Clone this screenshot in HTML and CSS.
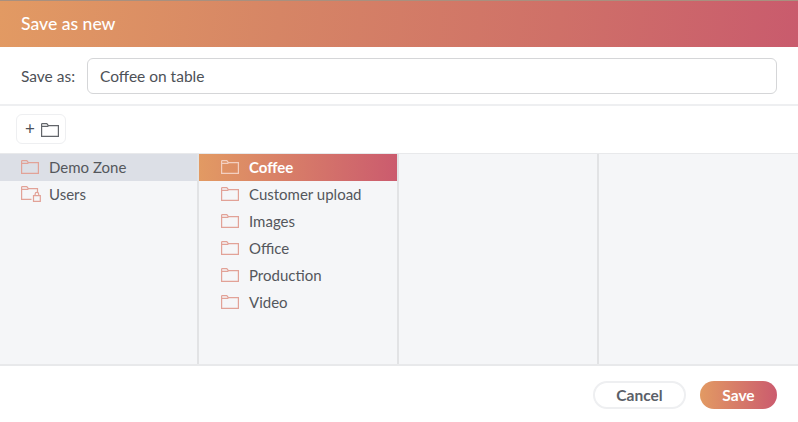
FILE: index.html
```html
<!DOCTYPE html>
<html lang="en">
<head>
<meta charset="utf-8">
<title>Save as new</title>
<link rel="stylesheet" href="styles.css">
</head>
<body>
<svg class="defs" width="0" height="0" aria-hidden="true">
  <symbol id="folder" viewBox="0 0 18 14">
    <path d="M.6 13.400V1.200C.6.800.9.600 1.300.600h4.500l1.600 2h10v10.800z M.6 3.300h6.800" fill="none" stroke="currentColor" stroke-width="1.200"/>
  </symbol>
  <symbol id="folder-lock" viewBox="0 0 20 16">
    <path d="M10.500 13.400H.6V1.200C.6.800.9.600 1.300.600h4.500l1.600 2h9.100v4 M.6 3.300h6.800" fill="none" stroke="currentColor" stroke-width="1.200"/>
    <path d="M12.500 9.600h6.800v5.700h-6.800z M14.100 9.600V8.200a1.800 1.800 0 0 1 3.600 0v1.400" fill="none" stroke="currentColor" stroke-width="1.200"/>
  </symbol>
</svg>
<main class="dialog">
  <header class="title-bar"><h1>Save as new</h1></header>
  <section class="name-row">
    <label class="name-label" for="name">Save as:</label>
    <input class="name-input" id="name" type="text" value="Coffee on table">
  </section>
  <section class="toolbar">
    <button class="new-folder" type="button"><span class="plus">+</span><svg class="toolbar-icon"><use href="#folder"/></svg></button>
  </section>
  <section class="columns">
    <ul class="column">
      <li class="item hover"><svg class="icon"><use href="#folder"/></svg>Demo Zone</li>
      <li class="item"><svg class="icon lock"><use href="#folder-lock"/></svg>Users</li>
    </ul>
    <ul class="column">
      <li class="item selected"><svg class="icon"><use href="#folder"/></svg>Coffee</li>
      <li class="item"><svg class="icon"><use href="#folder"/></svg>Customer upload</li>
      <li class="item"><svg class="icon"><use href="#folder"/></svg>Images</li>
      <li class="item"><svg class="icon"><use href="#folder"/></svg>Office</li>
      <li class="item"><svg class="icon"><use href="#folder"/></svg>Production</li>
      <li class="item"><svg class="icon"><use href="#folder"/></svg>Video</li>
    </ul>
    <ul class="column"></ul>
    <ul class="column"></ul>
  </section>
  <footer class="actions">
    <button class="btn cancel" type="button">Cancel</button>
    <button class="btn save" type="button">Save</button>
  </footer>
</main>
</body>
</html>
```
FILE: styles.css
```css
* { box-sizing: border-box; }
html, body { margin: 0; height: 100%; background: #fff; }
body { font-family: "Lato", "Liberation Sans", sans-serif; color: #4d5157; overflow: hidden; }
.defs { position: absolute; }
.dialog { width: 798px; height: 422px; display: flex; flex-direction: column; }
.title-bar {
  height: 47px; display: flex; align-items: center; padding: 0 21px 2px;
  background: linear-gradient(96deg, #e29a63 0%, #d68565 35%, #cf7068 70%, #c95b6d 100%);
  border-top: 1px solid #a8907f;
}
.title-bar h1 { margin: 0; font-size: 17.600px; font-weight: 500; color: #fff; }
.name-row {
  height: 59px; padding: 11px 21px; display: flex; align-items: flex-start; gap: 10px;
  border-bottom: 2px solid #eeeff1;
}
.name-label { font-size: 15.500px; line-height: 36px; width: 56px; }
.name-input {
  flex: 1; height: 36px; padding: 0 12px; font: 15.500px "Lato", sans-serif; color: #4d5157;
  border: 1.500px solid #d5d6d8; border-radius: 6px; background: #fff; outline: none;
}
.toolbar { height: 47px; padding: 8px 16px 0; }
.new-folder {
  width: 50px; height: 30px; padding: 1px 0 0 2px; display: flex; align-items: center; justify-content: center; gap: 6px;
  background: #fff; border: 1.500px solid #eeeff1; border-radius: 6px; color: #62656a;
}
.plus { font: 400 17px/18px "Lato", sans-serif; margin-top: -2px; color: #4d5157; }
.toolbar-icon { width: 18px; height: 14px; }
.columns {
  height: 213px; display: grid; grid-template-columns: 199px 200px 200px 1fr;
  background: #f5f6f8; border-top: 1px solid #e8e9eb; border-bottom: 2px solid #e8e9eb;
}
.column { margin: 0; padding: 0; list-style: none; border-right: 2px solid #e2e3e5; }
.column:last-child { border-right: 0; }
.item { height: 27px; display: flex; align-items: center; padding: 0 0 2px 21px; font-size: 15px; color: #54575c; }
.column:nth-child(2) .item { padding-left: 22px; }
.icon { width: 18px; height: 14px; margin-right: 10px; color: #e2a297; flex: none; }
.icon.lock { width: 20px; height: 16px; margin-right: 8px; }
.hover { background: #dcdfe6; }
.selected { background: linear-gradient(90deg, #e29a63, #cb5b6e); color: #fff; font-weight: 700; }
.selected .icon { color: #f3cfc0; }
.actions { flex: 1; display: flex; justify-content: flex-end; align-items: center; gap: 14px; padding: 2px 21px 0 0; }
.btn { height: 28px; border-radius: 14px; font: 700 15.500px "Lato", sans-serif; padding: 0; }
.cancel { width: 93px; background: #fff; border: 2px solid #eeeff1; color: #5b6068; }
.save { width: 77px; border: 0; color: #fff; background: linear-gradient(90deg, #e29a63, #cb5b6e); }
```
